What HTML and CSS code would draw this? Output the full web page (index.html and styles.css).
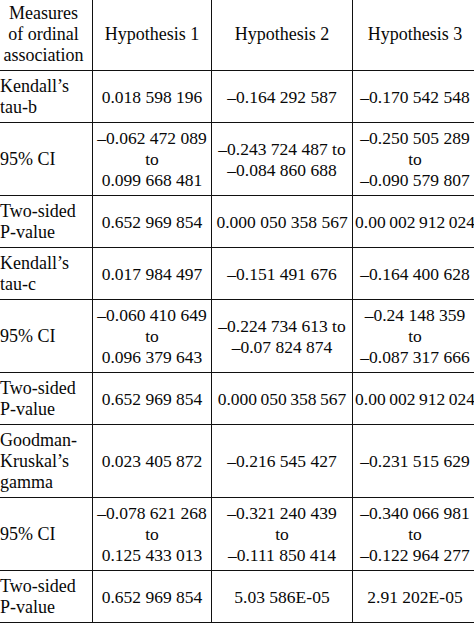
FILE: index.html
```html
<!DOCTYPE html>
<html lang="en">
<head>
<meta charset="utf-8">
<title>Measures of ordinal association</title>
<link rel="stylesheet" href="styles.css">
</head>
<body>
<div class="frame">
<table class="grid">
<colgroup>
<col class="c0"><col class="c1"><col class="c2"><col class="c3">
</colgroup>
<thead>
<tr>
<th class="label head">Measures<br>of ordinal<br>association</th>
<th>Hypothesis 1</th>
<th>Hypothesis 2</th>
<th>Hypothesis 3</th>
</tr>
</thead>
<tbody>
<tr>
<td class="label">Kendall’s<br>tau-b</td>
<td class="num">0.018 598 196</td>
<td class="num">–0.164 292 587</td>
<td class="num">–0.170 542 548</td>
</tr>
<tr>
<td class="label">95% CI</td>
<td class="num">–0.062 472 089<br>to<br>0.099 668 481</td>
<td class="num">–0.243 724 487 to<br>–0.084 860 688</td>
<td class="num">–0.250 505 289<br>to<br>–0.090 579 807</td>
</tr>
<tr>
<td class="label">Two-sided<br>P-value</td>
<td class="num">0.652 969 854</td>
<td class="num">0.000 050 358 567</td>
<td class="num">0.00&#8201;002&#8201;912&#8201;024</td>
</tr>
<tr>
<td class="label">Kendall’s<br>tau-c</td>
<td class="num">0.017 984 497</td>
<td class="num">–0.151 491 676</td>
<td class="num">–0.164 400 628</td>
</tr>
<tr>
<td class="label">95% CI</td>
<td class="num">–0.060 410 649<br>to<br>0.096 379 643</td>
<td class="num">–0.224 734 613 to<br>–0.07 824 874</td>
<td class="num">–0.24 148 359<br>to<br>–0.087 317 666</td>
</tr>
<tr>
<td class="label">Two-sided<br>P-value</td>
<td class="num">0.652 969 854</td>
<td class="num">0.000&#8201;050&#8201;358&#8201;567</td>
<td class="num">0.00&#8201;002&#8201;912&#8201;024</td>
</tr>
<tr>
<td class="label">Goodman-<br>Kruskal’s<br>gamma</td>
<td class="num">0.023 405 872</td>
<td class="num">–0.216 545 427</td>
<td class="num">–0.231 515 629</td>
</tr>
<tr>
<td class="label">95% CI</td>
<td class="num">–0.078 621 268<br>to<br>0.125 433 013</td>
<td class="num">–0.321 240 439<br>to<br>–0.111 850 414</td>
<td class="num">–0.340 066 981<br>to<br>–0.122 964 277</td>
</tr>
<tr>
<td class="label">Two-sided<br>P-value</td>
<td class="num">0.652 969 854</td>
<td class="num">5.03 586E-05</td>
<td class="num">2.91 202E-05</td>
</tr>
</tbody>
</table>
</div>
</body>
</html>
```
FILE: styles.css
```css
html, body {
  margin: 0;
  padding: 0;
  overflow: hidden;
  background: #ffffff;
}

.frame {
  width: 474px;
  height: 625px;
  overflow: hidden;
  background: #ffffff;
}

.grid {
  border-collapse: collapse;
  table-layout: fixed;
  width: 483px;
  margin: -3px 0 0 -6px;
  font-family: "Liberation Serif", "Times New Roman", serif;
  font-size: 18px;
  line-height: 21px;
  color: #080808;
}

.c0 { width: 98px; }
.c1 { width: 119px; }
.c2 { width: 141px; }
.c3 { width: 125px; }

.grid th,
.grid td {
  border: 1px solid #111111;
  padding: 5px 0 4px;
  text-align: center;
  vertical-align: middle;
  font-weight: normal;
  white-space: nowrap;
}

.grid .label {
  text-align: left;
  padding-left: 5px;
  padding-right: 5px;
}

.grid .head {
  text-align: center;
}

.grid .num {
  font-size: 17.5px;
}
```
